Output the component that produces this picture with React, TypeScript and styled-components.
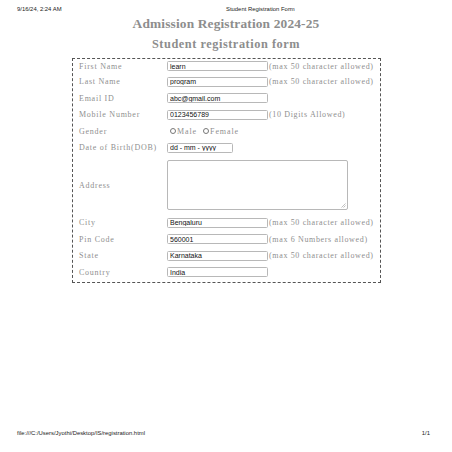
import React from "react";
import styled, { createGlobalStyle } from "styled-components";

const Global = createGlobalStyle`
  html, body { margin: 0; padding: 0; background: #fff; }
  body { width: 452px; height: 452px; overflow: hidden; position: relative; }
`;

const Page = styled.div`
  width: 452px;
  height: 452px;
  display: flex;
  flex-direction: column;
  font-family: "Liberation Serif", serif;
`;

const PrintHeader = styled.div`
  display: grid;
  grid-template-columns: 209px auto;
  padding: 6px 17px 0 17px;
  height: 8px;
  font-family: "Liberation Sans", Arial, sans-serif;
  font-size: 5.9px;
  line-height: 7px;
  color: #222;
`;

const Title = styled.h1`
  margin: 2px 0 0 0;
  text-align: center;
  font-size: 13.4px;
  font-weight: bold;
  letter-spacing: 0.15px;
  color: #8d8d8d;
  line-height: 15px;
`;

const SubTitle = styled.h2`
  margin: 6px 0 0 0;
  text-align: center;
  font-size: 12.3px;
  font-weight: bold;
  letter-spacing: 0.55px;
  color: #8d8d8d;
  line-height: 14px;
`;

const Box = styled.div`
  margin: 7px 0 0 72px;
  width: 309px;
  border: 1px dashed #555;
  padding: 0 0 1px 6px;
  box-sizing: border-box;
  display: grid;
  grid-template-columns: 88px 102px auto;
  grid-template-rows: 14.5px repeat(5, 16.5px) 58.5px repeat(4, 16.5px);
  align-items: center;
`;

const Label = styled.span`
  font-size: 8px;
  color: #8f8f8f;
  letter-spacing: 0.75px;
  white-space: nowrap;
`;

const Field = styled.input<{ $w?: number }>`
  box-sizing: border-box;
  width: ${(p) => p.$w ?? 101}px;
  height: 10px;
  border: 0.8px solid #b8b8b8;
  border-radius: 1.5px;
  padding: 0 2px;
  font-family: "Liberation Sans", Arial, sans-serif;
  font-size: 7px;
  color: #111;
  background: #fff;
  outline: none;
`;

const Hint = styled.span`
  font-size: 8px;
  color: #8f8f8f;
  letter-spacing: 0.65px;
  white-space: nowrap;
`;

const Area = styled.div`
  grid-column: span 2;
  box-sizing: border-box;
  width: 181px;
  height: 50px;
  margin-top: -1px;
  border: 0.8px solid #b8b8b8;
  border-radius: 2px;
  position: relative;
`;

const Grip = styled.svg`
  position: absolute;
  right: 1px;
  bottom: 1px;
`;

const Radios = styled.div`
  grid-column: span 2;
  display: flex;
  align-items: center;
  gap: 6px;
  padding-left: 3px;
  font-size: 8px;
  color: #8f8f8f;
  letter-spacing: 0.9px;
`;

const RadioItem = styled.span`
  display: flex;
  align-items: center;
  gap: 1px;
`;

const Dot = styled.span`
  display: inline-block;
  width: 6px;
  height: 6px;
  border-radius: 50%;
  border: 0.8px solid #777;
  box-sizing: border-box;
`;

const Spacer = styled.div`
  flex: 1;
`;

const Footer = styled.div`
  display: flex;
  justify-content: space-between;
  padding: 0 22px 16px 17px;
  font-family: "Liberation Sans", Arial, sans-serif;
  font-size: 5.9px;
  color: #222;
`;

const Empty = styled.span``;

type Row = { label: string; value: string; hint?: string; w?: number };

const top: Row[] = [
  { label: "First Name", value: "learn", hint: "(max 50 character allowed)" },
  { label: "Last Name", value: "program", hint: "(max 50 character allowed)" },
  { label: "Email ID", value: "abc@gmail.com" },
  { label: "Mobile Number", value: "0123456789", hint: "(10 Digits Allowed)" },
];

const bottom: Row[] = [
  { label: "City", value: "Bengaluru", hint: "(max 50 character allowed)" },
  { label: "Pin Code", value: "560001", hint: "(max 6 Numbers allowed)" },
  { label: "State", value: "Karnataka", hint: "(max 50 character allowed)" },
  { label: "Country", value: "India" },
];

const renderRow = (r: Row) => (
  <React.Fragment key={r.label}>
    <Label>{r.label}</Label>
    <Field $w={r.w} defaultValue={r.value} readOnly />
    {r.hint ? <Hint>{r.hint}</Hint> : <Empty />}
  </React.Fragment>
);

export default function App() {
  return (
    <Page>
      <Global />
      <PrintHeader>
        <span>9/16/24, 2:24 AM</span>
        <span>Student Registration Form</span>
      </PrintHeader>
      <Title>Admission Registration 2024-25</Title>
      <SubTitle>Student registration form</SubTitle>
      <Box>
        {top.map(renderRow)}
        <Label>Gender</Label>
        <Radios>
          <RadioItem>
            <Dot />
            Male
          </RadioItem>
          <RadioItem>
            <Dot />
            Female
          </RadioItem>
        </Radios>
        {renderRow({ label: "Date of Birth(DOB)", value: "dd - mm - yyyy", w: 66 })}
        <Label>Address</Label>
        <Area>
          <Grip width="5" height="5" viewBox="0 0 5 5">
            <path d="M4.5 0.5 L0.5 4.5 M4.5 2.5 L2.5 4.5" stroke="#999" strokeWidth="0.6" />
          </Grip>
        </Area>
        {bottom.map(renderRow)}
      </Box>
      <Spacer />
      <Footer>
        <span>file:///C:/Users/Jyothi/Desktop/IS/registration.html</span>
        <span>1/1</span>
      </Footer>
    </Page>
  );
}
